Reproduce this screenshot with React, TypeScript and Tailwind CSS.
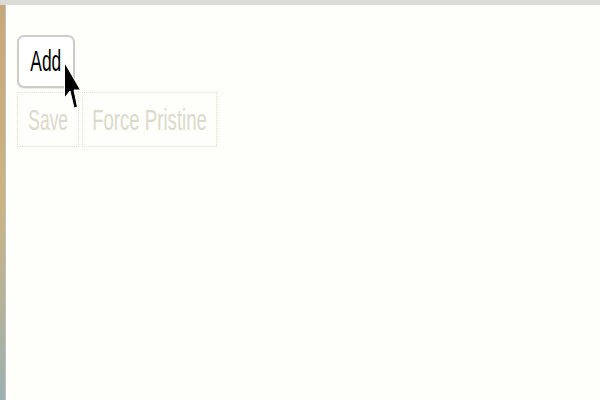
import React from "react";

function Cursor() {
  return (
    <svg
      className="absolute left-[63px] top-[61px]"
      width="19"
      height="49"
      viewBox="0 0 19 49"
    >
      <path
        d="M1.5 1.5 L1.5 37 L7 30 L11 47 L14.5 46 L11 29 L17.5 29 Z"
        fill="#000"
        stroke="#fff"
        strokeWidth="1"
        strokeLinejoin="round"
      />
    </svg>
  );
}

export default function App() {
  return (
    <div className="relative flex h-[400px] w-[600px] flex-col overflow-hidden bg-[#fefefa] font-['Liberation_Sans',Arial,sans-serif]">
      <div className="h-[5px] bg-[#dcdcd6]" />
      <div className="flex flex-1">
        <div className="w-[6px] border-r border-[#c0c0c4] bg-linear-to-b from-[#c8a878] via-[#ccb480] to-[#9cb0b0]" />
        <div className="flex flex-col gap-[4px] pl-[11px] pt-[30px]">
          <button className="flex h-[53px] w-[58px] items-center justify-center rounded-[7px] border-2 border-[#cdcdc8] bg-white shadow-[0_1px_1px_rgba(0,0,0,0.08)]">
            <span className="inline-block scale-x-[0.6] text-[29px] leading-none text-black">Add</span>
          </button>
          <div className="flex gap-[3px]">
            <button
              disabled
              className="flex h-[55px] w-[62px] items-center justify-center border border-dotted border-[#dedece] bg-transparent"
            >
              <span className="inline-block scale-x-[0.58] text-[30px] leading-none text-[#dadacc]">Save</span>
            </button>
            <button
              disabled
              className="flex h-[55px] w-[135px] items-center justify-center border border-dotted border-[#dedece] bg-transparent"
            >
              <span className="inline-block scale-x-[0.62] whitespace-nowrap text-[30px] leading-none text-[#dadacc]">
                Force Pristine
              </span>
            </button>
          </div>
        </div>
      </div>
      <Cursor />
    </div>
  );
}
